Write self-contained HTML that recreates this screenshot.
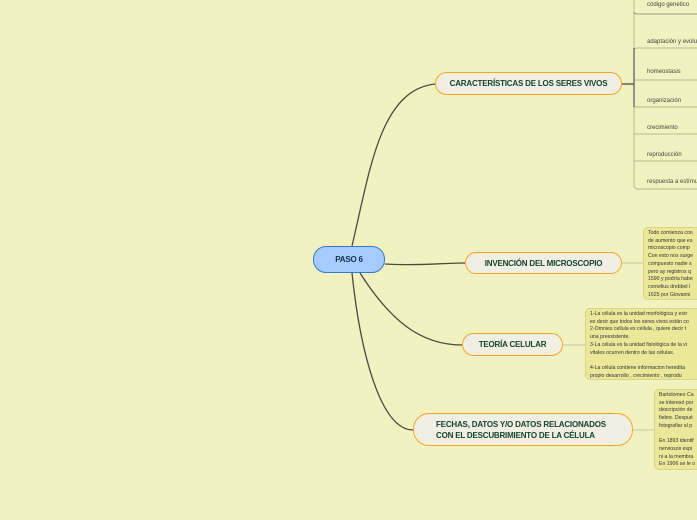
<!DOCTYPE html>
<html><head><meta charset="utf-8"><style>
body{margin:0;width:697px;height:520px;background:#f2f2c0;position:relative;overflow:hidden;font-family:"Liberation Sans",sans-serif}
.t{position:absolute;box-sizing:border-box;background:#f1efe2;border:1.5px solid #f5a623;border-radius:13px;color:#15442e;font-weight:bold;font-size:8px;display:flex;align-items:center;justify-content:center;text-align:center;letter-spacing:-0.2px}
.n{position:absolute;box-sizing:border-box;background:#ebe89a;border:1px solid #d8d58a;border-radius:5px;font-size:5.2px;line-height:7.7px;color:#333;padding:2px 4px;white-space:nowrap;overflow:hidden}
.s{position:absolute;left:647px;font-size:6px;color:#444;white-space:nowrap}
</style></head><body>
<svg width="697" height="520" style="position:absolute;left:0;top:0">
<g fill="none" stroke="#4a4a40" stroke-width="1.3">
<path d="M352 246 C370 170,380 90,435 84"/>
<path d="M385 264 C420 266,440 263,465 263"/>
<path d="M360 273 C390 320,420 345,462 345"/>
<path d="M352 273 C360 350,380 430,413 430"/>
<path d="M622 84 L634 84"/>
</g>
<g fill="none" stroke="#c8c6a0" stroke-width="1">
<path d="M622 263 L643 263"/><path d="M563 345 L585 345"/><path d="M633 430 L654 430"/>
</g>
<g fill="none" stroke="#b8b69a" stroke-width="1">
<path d="M634 0 V185 Q634 189 638 189 H697"/>
<path d="M634 12 Q634 14 638 14 H697" stroke="#9a9880"/>
<path d="M634 50 Q634 48 638 48 H697"/>
<path d="M634 80 H697"/><path d="M634 107 H697"/><path d="M634 134 H697"/><path d="M634 161 H697"/>
</g>
<path d="M634 48 V107" stroke="#555" stroke-width="1.2"/>
</svg>
<div class="s" style="top:2px">código genetico</div>
<div class="s" style="top:39px">adaptación y evolución</div>
<div class="s" style="top:69px">homeostasis</div>
<div class="s" style="top:98px">organización</div>
<div class="s" style="top:125px">crecimiento</div>
<div class="s" style="top:152px">reproducción</div>
<div class="s" style="top:179px">respuesta a estímulos</div>
<div class="t" style="left:313px;top:246px;width:72px;height:27px;background:#a8cbff;border-color:#2f7bd8;color:#13324a">PASO 6</div>
<div class="t" style="left:435px;top:72px;width:187px;height:23px">CARACTERÍSTICAS DE LOS SERES VIVOS</div>
<div class="t" style="left:465px;top:252px;width:157px;height:22px">INVENCIÓN DEL MICROSCOPIO</div>
<div class="t" style="left:462px;top:333px;width:101px;height:23px">TEORÍA CELULAR</div>
<div class="t" style="left:413px;top:413px;width:220px;height:33px;border-radius:16px;justify-content:flex-start;padding-left:22px;text-align:left;line-height:11px">FECHAS, DATOS Y/O DATOS RELACIONADOS<br>CON EL DESCUBRIMIENTO DE LA CÉLULA</div>
<div class="n" style="left:643px;top:227px;width:60px;height:73px">Todo comienza con<br>de aumento que es<br>microscopio comp<br>Con esto nos surge<br>compuesto nadie s<br>pero ay registros q<br>1590 y podría habe<br>cornelius drebbel l<br>1625 por Giovanni</div>
<div class="n" style="left:585px;top:308px;width:120px;height:72px">1-La célula es la unidad morfológica y estr<br>es decir que todos los seres vivos están co<br>2-Omnies cellula ex cellula , quiere decir t<br>una preexistente.<br>3-La célula es la unidad fisiológica de la vi<br>vitales ocurren dentro de las células.<br><br>4-La célula contiene informacion heredita<br>propio desarrollo , crecimiento , reprodu</div>
<div class="n" style="left:654px;top:389px;width:50px;height:81px">Bartolomeo Ca<br>se interesó por<br>descripción de<br>fiebre. Despué<br>fotografiar al p<br><br>En 1893 identif<br>nerviosos espi<br>ni a la membra<br>En 1906 se le o</div>
</body></html>
